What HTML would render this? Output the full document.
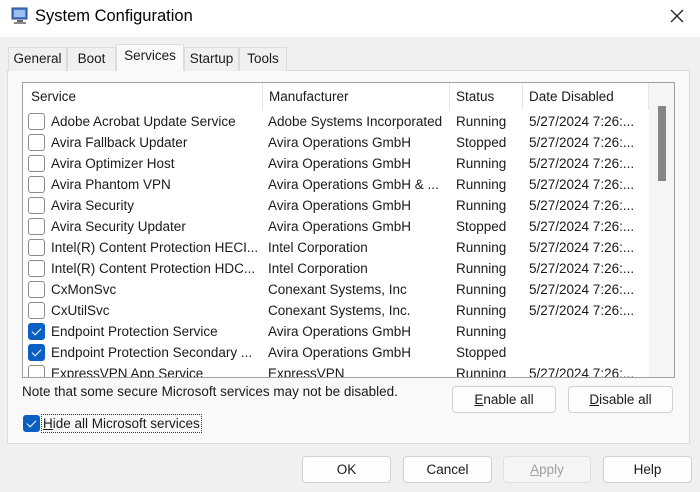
<!DOCTYPE html>
<html><head><meta charset="utf-8"><style>
*{box-sizing:border-box;margin:0;padding:0}
body{width:700px;height:492px;background:#f0f0f0;font-family:"Liberation Sans",sans-serif;font-size:13.5px;color:#1a1a1a;position:relative;overflow:hidden}
.abs{position:absolute}
.title{left:0;top:0;width:700px;height:37px;background:#fff}
.tab{position:absolute;top:47px;height:24px;line-height:22px;text-align:center;background:#f0f0f0;border:1px solid #dcdcdc;border-bottom:none}
.panel{left:7px;top:70px;width:683px;height:374px;background:#f9f9f9;border:1px solid #dcdcdc}
.list{left:22px;top:82px;width:653px;height:296px;background:#fff;border:1px solid #a0a0a0;overflow:hidden}
.hdr{position:absolute;top:0;height:27px;line-height:27px;border-right:1px solid #e5e5e5}
.row{position:absolute;left:0;height:21px;line-height:21px;width:635px;white-space:nowrap}
.row span{position:absolute}
.cb{position:absolute;left:5px;top:2px;width:17px;height:17px;border:1px solid #8a8a8a;border-radius:3px;background:#fff}
.cb.on{background:#0a5fc2;border-color:#0a5fc2}
.cb.on:after{content:"";position:absolute;left:5px;top:2px;width:4px;height:8px;border:solid #fff;border-width:0 1.5px 1.5px 0;transform:rotate(45deg)}
.btn{position:absolute;height:27px;line-height:25px;text-align:center;background:#fdfdfd;border:1px solid #d0d0d0;border-radius:4px}
</style></head><body>
<div class="abs title"></div>
<svg class="abs" style="left:10px;top:6px" width="20" height="20" viewBox="0 0 20 20"><rect x="2" y="2" width="15" height="11" fill="#4a78c8" stroke="#2a4a90"/><rect x="4" y="4" width="11" height="7" fill="#9cc0f0"/><rect x="7" y="14" width="6" height="2" fill="#666"/><rect x="4" y="16" width="12" height="2" fill="#888"/></svg>
<div class="abs" style="left:35px;top:7px;font-size:16.5px;color:#000">System Configuration</div>
<svg class="abs" style="left:670px;top:9px" width="14" height="14"><path d="M1 1L13 13M13 1L1 13" stroke="#222" stroke-width="1.3"/></svg>
<div class="abs panel"></div>
<div class="tab" style="left:8px;width:59px">General</div>
<div class="tab" style="left:67px;width:49px">Boot</div>
<div class="tab" style="left:116px;width:68px;top:44px;height:27px;background:#f9f9f9;border-color:#dcdcdc">Services</div>
<div class="tab" style="left:184px;width:55px">Startup</div>
<div class="tab" style="left:239px;width:48px">Tools</div>
<div class="abs list">
<div class="hdr" style="left:0;width:240px;padding-left:8px">Service</div>
<div class="hdr" style="left:240px;width:187px;padding-left:6px">Manufacturer</div>
<div class="hdr" style="left:427px;width:73px;padding-left:6px">Status</div>
<div class="hdr" style="left:500px;width:126px;padding-left:6px">Date Disabled</div>
<div class="abs" style="left:626px;top:0;width:27px;height:296px;background:#f5f5f5"></div>
<div class="abs" style="left:635px;top:23px;width:8px;height:75px;background:#868686"></div>
<div class="row" style="top:28px"><i class="cb"></i><span style="left:28px">Adobe Acrobat Update Service</span><span style="left:245px">Adobe Systems Incorporated</span><span style="left:433px">Running</span><span style="left:506px">5/27/2024 7:26:...</span></div>
<div class="row" style="top:49px"><i class="cb"></i><span style="left:28px">Avira Fallback Updater</span><span style="left:245px">Avira Operations GmbH</span><span style="left:433px">Stopped</span><span style="left:506px">5/27/2024 7:26:...</span></div>
<div class="row" style="top:70px"><i class="cb"></i><span style="left:28px">Avira Optimizer Host</span><span style="left:245px">Avira Operations GmbH</span><span style="left:433px">Running</span><span style="left:506px">5/27/2024 7:26:...</span></div>
<div class="row" style="top:91px"><i class="cb"></i><span style="left:28px">Avira Phantom VPN</span><span style="left:245px">Avira Operations GmbH &amp; ...</span><span style="left:433px">Running</span><span style="left:506px">5/27/2024 7:26:...</span></div>
<div class="row" style="top:112px"><i class="cb"></i><span style="left:28px">Avira Security</span><span style="left:245px">Avira Operations GmbH</span><span style="left:433px">Running</span><span style="left:506px">5/27/2024 7:26:...</span></div>
<div class="row" style="top:133px"><i class="cb"></i><span style="left:28px">Avira Security Updater</span><span style="left:245px">Avira Operations GmbH</span><span style="left:433px">Stopped</span><span style="left:506px">5/27/2024 7:26:...</span></div>
<div class="row" style="top:154px"><i class="cb"></i><span style="left:28px">Intel(R) Content Protection HECI...</span><span style="left:245px">Intel Corporation</span><span style="left:433px">Running</span><span style="left:506px">5/27/2024 7:26:...</span></div>
<div class="row" style="top:175px"><i class="cb"></i><span style="left:28px">Intel(R) Content Protection HDC...</span><span style="left:245px">Intel Corporation</span><span style="left:433px">Running</span><span style="left:506px">5/27/2024 7:26:...</span></div>
<div class="row" style="top:196px"><i class="cb"></i><span style="left:28px">CxMonSvc</span><span style="left:245px">Conexant Systems, Inc</span><span style="left:433px">Running</span><span style="left:506px">5/27/2024 7:26:...</span></div>
<div class="row" style="top:217px"><i class="cb"></i><span style="left:28px">CxUtilSvc</span><span style="left:245px">Conexant Systems, Inc.</span><span style="left:433px">Running</span><span style="left:506px">5/27/2024 7:26:...</span></div>
<div class="row" style="top:238px"><i class="cb on"></i><span style="left:28px">Endpoint Protection Service</span><span style="left:245px">Avira Operations GmbH</span><span style="left:433px">Running</span></div>
<div class="row" style="top:259px"><i class="cb on"></i><span style="left:28px">Endpoint Protection Secondary ...</span><span style="left:245px">Avira Operations GmbH</span><span style="left:433px">Stopped</span></div>
<div class="row" style="top:280px"><i class="cb"></i><span style="left:28px">ExpressVPN App Service</span><span style="left:245px">ExpressVPN</span><span style="left:433px">Running</span><span style="left:506px">5/27/2024 7:26:...</span></div>
</div>
<div class="abs" style="left:22px;top:384px">Note that some secure Microsoft services may not be disabled.</div>
<div class="btn" style="left:452px;top:386px;width:104px"><u>E</u>nable all</div>
<div class="btn" style="left:568px;top:386px;width:105px"><u>D</u>isable all</div>
<i class="cb on" style="left:23px;top:415px"></i>
<div class="abs" style="left:41px;top:414px;border:1px dotted #333;padding:0 1px;line-height:17px"><u>H</u>ide all Microsoft services</div>
<div class="btn" style="left:302px;top:456px;width:89px">OK</div>
<div class="btn" style="left:403px;top:456px;width:89px">Cancel</div>
<div class="btn" style="left:503px;top:456px;width:88px;background:#f5f5f5;color:#a0a0a0;border-color:#e0e0e0"><u>A</u>pply</div>
<div class="btn" style="left:603px;top:456px;width:89px">Help</div>
</body></html>
